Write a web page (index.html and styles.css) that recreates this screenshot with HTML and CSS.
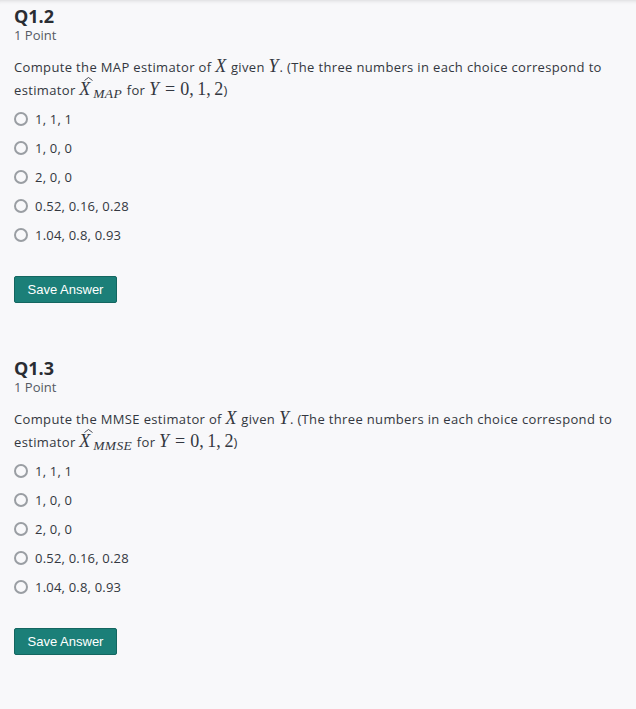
FILE: index.html
```html
<!DOCTYPE html>
<html>
    <head>
        <title>Preguntas</title>
        <meta charset="UTF-8">
        <meta name="viewport" content="width=device-width, initial-scale=1.0">
        <link rel="stylesheet" href="styles.css">
    </head>
    <body>
        <div class="pagina">

            <!--PREGUNTA 1.2-->
            <section class="pregunta">
                <h2 class="titulo">Q1.2</h2>
                <div class="puntos">1 Point</div>
                <p class="enunciado">
                    Compute the MAP estimator of <span class="mat"><i>X</i></span> given <span class="mat"><i>Y</i></span>. (The three numbers in each choice correspond to
                    estimator <span class="mat"><span class="sombrero"><i>X</i><svg class="acento" width="9" height="4" viewBox="0 0 9 4"><polyline points="0.5,3.5 4.5,0.5 8.5,3.5" fill="none" stroke="#333740" stroke-width="0.9"/></svg></span><sub><i>MAP</i></sub></span> for <span class="mat"><i>Y</i><span class="igual">=</span>0,&thinsp;1,&thinsp;2</span>)
                </p>
                <div class="opciones">
                    <label class="opcion"><input type="radio" name="q12"><span class="circulo"></span>1, 1, 1</label>
                    <label class="opcion"><input type="radio" name="q12"><span class="circulo"></span>1, 0, 0</label>
                    <label class="opcion"><input type="radio" name="q12"><span class="circulo"></span>2, 0, 0</label>
                    <label class="opcion"><input type="radio" name="q12"><span class="circulo"></span>0.52, 0.16, 0.28</label>
                    <label class="opcion"><input type="radio" name="q12"><span class="circulo"></span>1.04, 0.8, 0.93</label>
                </div>
                <button type="button" class="btn-guardar">Save Answer</button>
            </section>

            <!--PREGUNTA 1.3-->
            <section class="pregunta">
                <h2 class="titulo">Q1.3</h2>
                <div class="puntos">1 Point</div>
                <p class="enunciado">
                    Compute the MMSE estimator of <span class="mat"><i>X</i></span> given <span class="mat"><i>Y</i></span>. (The three numbers in each choice correspond to
                    estimator <span class="mat"><span class="sombrero"><i>X</i><svg class="acento" width="9" height="4" viewBox="0 0 9 4"><polyline points="0.5,3.5 4.5,0.5 8.5,3.5" fill="none" stroke="#333740" stroke-width="0.9"/></svg></span><sub><i>MMSE</i></sub></span> for <span class="mat"><i>Y</i><span class="igual">=</span>0,&thinsp;1,&thinsp;2</span>)
                </p>
                <div class="opciones">
                    <label class="opcion"><input type="radio" name="q13"><span class="circulo"></span>1, 1, 1</label>
                    <label class="opcion"><input type="radio" name="q13"><span class="circulo"></span>1, 0, 0</label>
                    <label class="opcion"><input type="radio" name="q13"><span class="circulo"></span>2, 0, 0</label>
                    <label class="opcion"><input type="radio" name="q13"><span class="circulo"></span>0.52, 0.16, 0.28</label>
                    <label class="opcion"><input type="radio" name="q13"><span class="circulo"></span>1.04, 0.8, 0.93</label>
                </div>
                <button type="button" class="btn-guardar">Save Answer</button>
            </section>

        </div>
    </body>
</html>
```
FILE: styles.css
```css
body{
    margin: 0;
    background: #f8f8fa;
    color: #333740;
    font-family: "Open Sans", "Liberation Sans", sans-serif;
    box-shadow: inset 0 5px 5px -5px rgba(0,0,0,0.18);
    min-height: 709px;
}
.pagina{
    padding: 0 14px;
}
.pregunta{
    height: 352px;
}
.titulo{
    margin: 0;
    padding-top: 6px;
    font-size: 18px;
    line-height: 20px;
    font-weight: 700;
    color: #2a2d33;
}
.puntos{
    font-size: 13px;
    line-height: 18px;
    color: #555a63;
}
.enunciado{
    margin: 12px 0 2px 0;
    font-size: 13px;
    line-height: 23px;
    letter-spacing: 0.35px;
}
.mat{
    font-family: "Liberation Serif", serif;
    font-size: 18px;
    line-height: 1;
    letter-spacing: 0;
}
.mat i{
    padding-right: 1px;
}
.sombrero i{
    padding-right: 2px;
}
.mat sub{
    font-size: 13.5px;
    line-height: 1;
    vertical-align: -3px;
    padding-left: 1px;
    letter-spacing: 0.3px;
}
.igual{
    padding: 0 5px;
}
.sombrero{
    position: relative;
    display: inline-block;
}
.acento{
    position: absolute;
    left: 5px;
    top: -3px;
}
.opciones{
    display: flex;
    flex-direction: column;
}
.opcion{
    display: flex;
    align-items: center;
    height: 29px;
    font-size: 13px;
    letter-spacing: 0.2px;
    color: #333740;
}
.opcion input{
    display: none;
}
.circulo{
    width: 10px;
    height: 10px;
    border: 2px solid #9a9ea3;
    border-radius: 50%;
    margin-right: 7px;
}
.btn-guardar{
    margin-top: 27px;
    width: 103px;
    height: 27px;
    background: #1b7f78;
    border: 1px solid #146660;
    border-radius: 2px;
    color: #fff;
    font-family: "Liberation Sans", Arial, sans-serif;
    font-size: 13px;
    padding: 0;
}
```
